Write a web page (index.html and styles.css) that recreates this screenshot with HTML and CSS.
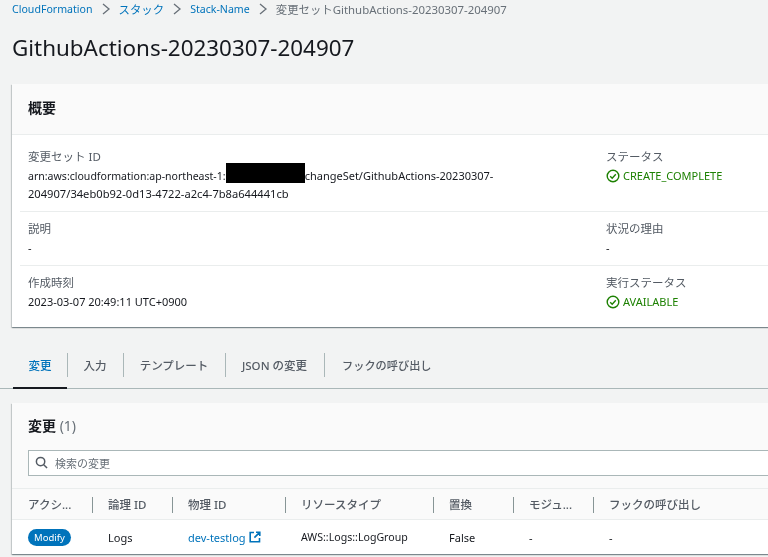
FILE: index.html
```html
<!DOCTYPE html>
<html lang="ja">
<head>
<meta charset="utf-8">
<title>GithubActions-20230307-204907</title>
<link rel="stylesheet" href="styles.css">
</head>
<body>
<div class="page">
  <nav class="crumbs">
    <a class="latin">CloudFormation</a>
    <svg class="sep" viewBox="0 0 10 12"><path d="M2 1l6 5-6 5"/></svg>
    <a>スタック</a>
    <svg class="sep" viewBox="0 0 10 12"><path d="M2 1l6 5-6 5"/></svg>
    <a class="latin">Stack-Name</a>
    <svg class="sep" viewBox="0 0 10 12"><path d="M2 1l6 5-6 5"/></svg>
    <span class="current">変更セットGithubActions-20230307-204907</span>
  </nav>
  <h1 class="title">GithubActions-20230307-204907</h1>

  <section class="card summary">
    <h2 class="card-head">概要</h2>
    <div class="row row-a">
      <div class="cell">
        <div class="label">変更セット ID</div>
        <div class="value arn"><span class="arn-prefix">arn:aws:cloudformation:ap-northeast-1:</span><span class="mask"></span>changeSet/GithubActions-20230307-<br><span class="arn-tail">204907/34eb0b92-0d13-4722-a2c4-7b8a644441cb</span></div>
      </div>
      <div class="cell">
        <div class="label">ステータス</div>
        <div class="value ok"><svg class="check" viewBox="0 0 14 14"><circle cx="7" cy="7" r="5.8"/><path d="M4.2 7.2l2 2 3.6-4"/></svg>CREATE_COMPLETE</div>
      </div>
    </div>
    <div class="row row-b">
      <div class="cell">
        <div class="label">説明</div>
        <div class="value">-</div>
      </div>
      <div class="cell">
        <div class="label">状況の理由</div>
        <div class="value">-</div>
      </div>
    </div>
    <div class="row row-c">
      <div class="cell">
        <div class="label">作成時刻</div>
        <div class="value">2023-03-07 20:49:11 UTC+0900</div>
      </div>
      <div class="cell">
        <div class="label">実行ステータス</div>
        <div class="value ok"><svg class="check" viewBox="0 0 14 14"><circle cx="7" cy="7" r="5.8"/><path d="M4.2 7.2l2 2 3.6-4"/></svg>AVAILABLE</div>
      </div>
    </div>
  </section>

  <div class="tabs">
    <div class="tab active t1"><span>変更</span></div>
    <div class="tab t2"><span>入力</span></div>
    <div class="tab t3"><span>テンプレート</span></div>
    <div class="tab t4"><span>JSON の変更</span></div>
    <div class="tab t5"><span>フックの呼び出し</span></div>
  </div>

  <section class="card changes">
    <div class="changes-top">
      <h2 class="changes-head">変更 <span class="count">(1)</span></h2>
      <div class="search">
        <svg class="glass" viewBox="0 0 14 14"><circle cx="6" cy="6" r="4.5"/><path d="M9.4 9.4l3.6 3.6"/></svg>
        <span>検索の変更</span>
      </div>
    </div>
    <div class="thead">
      <div class="th c1">アクシ...</div>
      <div class="th c2">論理 ID</div>
      <div class="th c3">物理 ID</div>
      <div class="th c4">リソースタイプ</div>
      <div class="th c5">置換</div>
      <div class="th c6">モジュ...</div>
      <div class="th c7">フックの呼び出し</div>
    </div>
    <div class="tbody">
      <div class="td c1"><span class="badge">Modify</span></div>
      <div class="td c2">Logs</div>
      <div class="td c3"><a class="ext">dev-testlog<svg class="exticon" viewBox="0 0 12 12"><path d="M5 1.5H1.2v9.3h9.3V7M7 1.2h3.8V5M10.6 1.4L5.4 6.6"/></svg></a></div>
      <div class="td c4 restype">AWS::Logs::LogGroup</div>
      <div class="td c5">False</div>
      <div class="td c6">-</div>
      <div class="td c7">-</div>
    </div>
  </section>
</div>
</body>
</html>
```
FILE: styles.css
```css
html, body {
  margin: 0;
  padding: 0;
  height: 557px;
  overflow: hidden;
  background: #f2f3f3;
}
body {
  font-family: "Noto Sans", "Noto Sans CJK JP", sans-serif;
  font-size: 12px;
  color: #16191f;
}
.page {
  width: 800px;
  padding-left: 12px;
  box-sizing: border-box;
  filter: blur(0.35px);
}
.crumbs {
  height: 18px;
  display: flex;
  align-items: center;
  font-size: 11.4px;
  white-space: nowrap;
}
.crumbs a { color: #0073bb; }
.crumbs .latin { font-size: 10.6px; }
.sep {
  width: 10px;
  height: 12px;
  margin: 0 8px 0 8px;
  fill: none;
  stroke: #687078;
  stroke-width: 1.3;
}
.current { color: #687078; }
.title {
  margin: 15px 0 0;
  height: 51px;
  font-size: 22.4px;
  line-height: 30px;
  font-weight: 400;
}
.card {
  background: #fff;
  box-shadow: 0 1px 1px 0 rgba(0, 28, 36, .3), 1px 1px 1px 0 rgba(0, 28, 36, .15), -1px 1px 1px 0 rgba(0, 28, 36, .15);
}
.summary { height: 243px; }
.card-head {
  margin: 0;
  height: 51px;
  padding-left: 16px;
  box-sizing: border-box;
  background: #fafafa;
  border-bottom: 1px solid #eaeded;
  font-size: 14px;
  line-height: 48px;
  font-weight: 700;
}
.row {
  margin-left: 8px;
  padding-left: 8px;
  display: grid;
  grid-template-columns: 578px 1fr;
  box-sizing: border-box;
  border-bottom: 1px solid #eaeded;
}
.row-a { height: 77px; padding-top: 12px; }
.row-b { height: 54px; padding-top: 7px; }
.row-c { height: 61px; padding-top: 7px; border-bottom: 0; }
.label {
  height: 19px;
  line-height: 19px;
  color: #545b64;
  font-size: 11.5px;
}
.value {
  margin-top: 1px;
  line-height: 18px;
  font-size: 11px;
  white-space: nowrap;
}
.arn-prefix { font-size: 10.55px; }
.arn-tail { font-size: 11.15px; }
.mask {
  display: inline-block;
  width: 79px;
  height: 20px;
  margin: -10px 0 -2px;
  vertical-align: middle;
  background: #000;
}
.ok {
  display: flex;
  align-items: center;
  color: #1d8102;
}
.check {
  width: 14px;
  height: 14px;
  margin-right: 3px;
  fill: none;
  stroke: #1d8102;
  stroke-width: 1.4;
}
.tabs {
  margin: 26px 0 0 -12px;
  height: 35px;
  padding-left: 13px;
  display: flex;
  border-bottom: 1px solid #aab7b8;
  font-size: 11.5px;
  color: #545b64;
  font-weight: 500;
}
.tab {
  height: 36px;
  display: flex;
  align-items: center;
  box-sizing: border-box;
  padding-bottom: 12px;
  position: relative;
  white-space: nowrap;
}
.tab + .tab::before {
  content: "";
  position: absolute;
  left: 0;
  top: 0;
  height: 24px;
  width: 1px;
  background: #aab7b8;
}
.t1 { width: 54px; justify-content: center; }
.t2 { width: 56px; justify-content: center; }
.t3 { width: 102px; justify-content: center; }
.t4 { width: 99px; justify-content: center; }
.t5 { width: 126px; padding-left: 18px; font-size: 11.2px; }
.active {
  color: #0073bb;
  border-bottom: 2px solid #16191f;
  padding-bottom: 10px;
}
.changes { margin-top: 14px; height: 151px; }
.changes-top {
  height: 86px;
  background: #fafafa;
  padding: 10px 0 0 16px;
  box-sizing: border-box;
  border-bottom: 1px solid #eaeded;
}
.changes-head {
  margin: 0;
  height: 37px;
  line-height: 26px;
  font-size: 14px;
  font-weight: 700;
}
.count { color: #687078; font-weight: 400; }
.search {
  height: 26px;
  padding-bottom: 1px;
  display: flex;
  align-items: center;
  background: #fff;
  border: 1px solid #aab7b8;
  box-sizing: border-box;
  color: #687078;
  font-size: 11px;
}
.glass {
  width: 13px;
  height: 13px;
  margin: 0 7px 0 6px;
  fill: none;
  stroke: #545b64;
  stroke-width: 1.6;
}
.thead, .tbody {
  display: grid;
  grid-template-columns: 64px 80px 113px 148px 80px 80px 200px;
  align-items: center;
  padding-left: 16px;
}
.thead {
  height: 31px;
  padding-top: 1px;
  background: #fafafa;
  border-bottom: 1px solid #eaeded;
  box-sizing: border-box;
  color: #545b64;
  font-size: 11.5px;
  font-weight: 500;
}
.th {
  position: relative;
  height: 16px;
  line-height: 16px;
  white-space: nowrap;
}
.th + .th { padding-left: 16px; }
.th + .th::before {
  content: "";
  position: absolute;
  left: 0;
  top: 0;
  height: 16px;
  width: 1px;
  background: #879596;
}
.tbody {
  height: 34px;
  font-size: 11px;
}
.td + .td { padding-left: 16px; }
.restype { font-size: 10.6px; }
.badge {
  display: inline-block;
  width: 43px;
  height: 17px;
  line-height: 17px;
  text-align: center;
  border-radius: 9px;
  background: #0073bb;
  color: #fff;
  font-size: 9.5px;
}
.ext {
  display: inline-flex;
  align-items: center;
  color: #0073bb;
}
.exticon {
  width: 12px;
  height: 12px;
  margin-left: 3px;
  fill: none;
  stroke: #0073bb;
  stroke-width: 1.6;
}
```
